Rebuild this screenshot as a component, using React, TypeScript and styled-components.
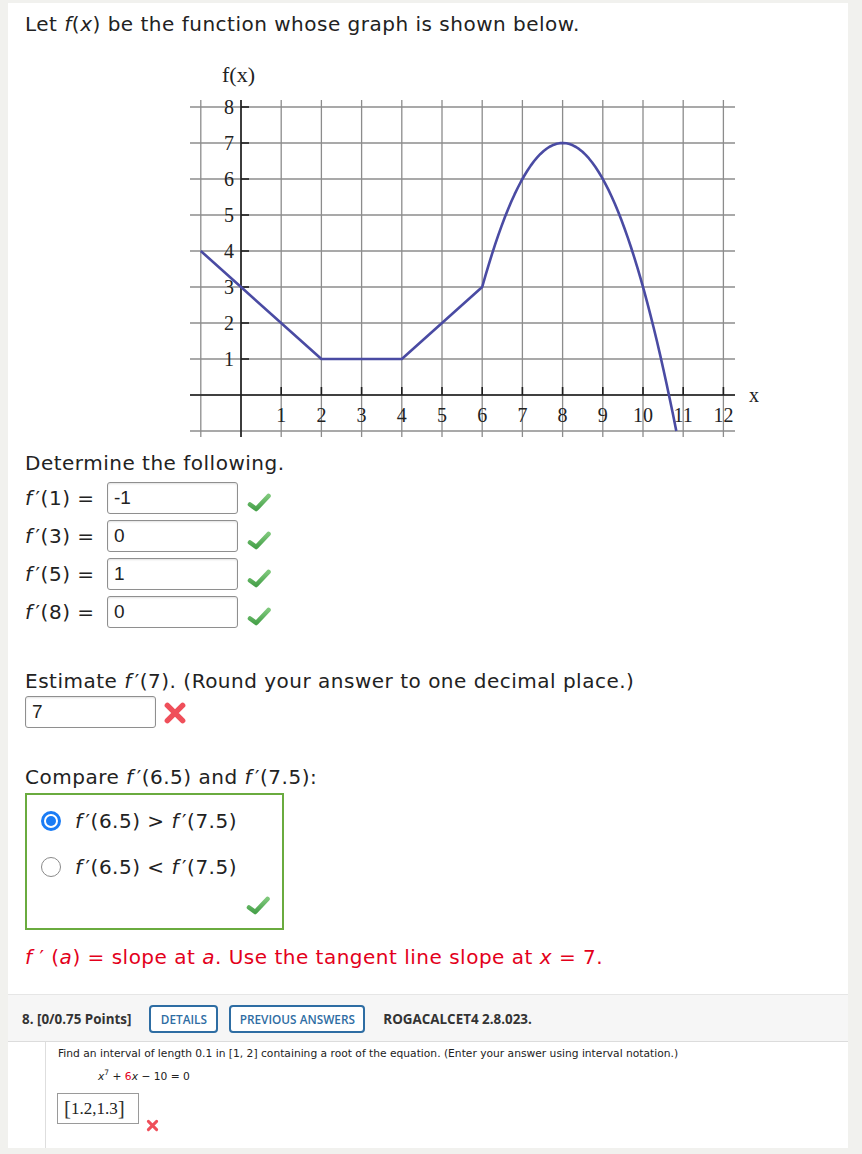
import React from 'react';
import styled, { createGlobalStyle } from 'styled-components';

const Global = createGlobalStyle`
  html, body { margin: 0; padding: 0; }
  body {
    background: #f1f1ee;
    font-family: "DejaVu Sans", Verdana, sans-serif;
    color: #222;
  }
`;

const Page = styled.div`
  padding: 3px 14px 6px 8px;
`;

const Card = styled.div`
  background: #fff;
  min-height: 1145px;
  display: flex;
  flex-direction: column;
`;

const Content = styled.div`
  padding: 9px 0 0 17px;
  display: flex;
  flex-direction: column;
  align-items: flex-start;
`;

const Para = styled.div<{ $mt?: number; $color?: string }>`
  font-size: 20px;
  line-height: 24px;
  letter-spacing: 0.5px;
  margin-top: ${(p) => p.$mt ?? 0}px;
  color: ${(p) => p.$color ?? '#222'};
  white-space: nowrap;
`;

const I = styled.i`
  font-style: italic;
`;

const F = styled.i`
  font-style: italic;
  margin-right: 3px;
`;

const GraphBox = styled.div`
  margin: 19px 0 0 160px;
  width: 600px;
  height: 390px;
`;

const Rows = styled.div`
  margin-top: 7px;
  display: flex;
  flex-direction: column;
  gap: 6px;
`;

const Row = styled.div`
  display: flex;
  align-items: center;
  height: 32px;
`;

const Label = styled.div`
  font-size: 20px;
  letter-spacing: 0.5px;
  width: 82px;
  white-space: nowrap;
`;

const AnswerInput = styled.div<{ $w: number }>`
  width: ${(p) => p.$w}px;
  height: 32px;
  box-sizing: border-box;
  border: 1px solid #8f8f8f;
  border-radius: 3px;
  box-shadow: inset 0 1px 2px rgba(0, 0, 0, 0.12);
  font-family: "Liberation Sans", Arial, sans-serif;
  font-size: 19px;
  line-height: 30px;
  padding-left: 6px;
  color: #222;
  background: #fff;
`;

const Mark = styled.span<{ $ml: number; $dy?: number }>`
  display: inline-flex;
  margin-left: ${(p) => p.$ml}px;
  transform: translateY(${(p) => p.$dy ?? 0}px);
`;

const EstRow = styled.div`
  margin-top: 3px;
  display: flex;
  align-items: center;
`;

const ChoiceBox = styled.div`
  margin-top: 4px;
  width: 259px;
  height: 137px;
  box-sizing: border-box;
  border: 2px solid #6aab3f;
  padding: 10px 10px 0 14px;
  display: flex;
  flex-direction: column;
  gap: 14px;
`;

const Option = styled.div`
  display: flex;
  align-items: center;
  height: 32px;
  gap: 14px;
  font-size: 20px;
  letter-spacing: 0.5px;
  white-space: nowrap;
`;

const Radio = styled.span<{ $on?: boolean }>`
  width: 20px;
  height: 20px;
  box-sizing: border-box;
  border-radius: 50%;
  flex: none;
  background: #fff;
  border: ${(p) => (p.$on ? '3px solid #1a7cf5' : '1.5px solid #8a8a8a')};
  display: flex;
  align-items: center;
  justify-content: center;
  &::after {
    content: '';
    display: ${(p) => (p.$on ? 'block' : 'none')};
    width: 10px;
    height: 10px;
    border-radius: 50%;
    background: #1a7cf5;
  }
`;

const BoxCheck = styled.div`
  display: flex;
  justify-content: flex-end;
  padding-right: 2px;
  margin-top: -2px;
`;

const Bar = styled.div`
  margin-top: 25px;
  height: 48px;
  box-sizing: border-box;
  border-top: 1px solid #e6e6e6;
  border-bottom: 1px solid #dcdcdc;
  background: #f6f6f6;
  display: flex;
  align-items: center;
  padding: 2px 0 0 14px;
  font-family: "Open Sans", "Liberation Sans", sans-serif;
  color: #333;
`;

const BarText = styled.span<{ $ml: number }>`
  font-weight: 700;
  font-size: 13.4px;
  margin-left: ${(p) => p.$ml}px;
  white-space: nowrap;
`;

const BarButton = styled.span<{ $w: number; $ml: number }>`
  width: ${(p) => p.$w}px;
  height: 28px;
  margin-left: ${(p) => p.$ml}px;
  box-sizing: border-box;
  border: 2px solid #2e6da3;
  border-radius: 4px;
  color: #2e6da3;
  font-size: 11.8px;
  font-weight: 600;
  display: flex;
  align-items: center;
  justify-content: center;
  background: #fff;
`;

const QBody = styled.div`
  margin-left: 37px;
  border-left: 1px solid #dedede;
  padding: 4px 0 0 12px;
  flex: 1;
  display: flex;
  flex-direction: column;
  align-items: flex-start;
`;

const Small = styled.div<{ $mt?: number; $ml?: number }>`
  font-size: 10.7px;
  line-height: 16px;
  margin-top: ${(p) => p.$mt ?? 0}px;
  margin-left: ${(p) => p.$ml ?? 0}px;
  white-space: nowrap;
  color: #222;
`;

const Red = styled.span`
  color: #e3001b;
`;

const MathBoxRow = styled.div`
  margin-top: 8px;
  margin-left: -1px;
  display: flex;
  align-items: flex-end;
`;

const MathBox = styled.div`
  width: 82px;
  height: 31px;
  box-sizing: border-box;
  border: 1px solid #9a9a9a;
  font-family: "Liberation Serif", "Times New Roman", serif;
  font-size: 17px;
  display: flex;
  align-items: center;
  padding-left: 6px;
  color: #222;
`;

const Bracket = styled.span`
  font-size: 21px;
  font-weight: 300;
  color: #333;
`;

const Sup = styled.sup`
  font-size: 7.5px;
  vertical-align: 5px;
  line-height: 0;
`;

function Check({ w = 24 }: { w?: number }) {
  const h = (w * 20) / 24;
  return (
    <svg width={w} height={h} viewBox="0 0 24 20">
      <defs>
        <linearGradient id="cg" x1="0" y1="0" x2="0" y2="1">
          <stop offset="0" stopColor="#7dc77a" />
          <stop offset="1" stopColor="#48a24b" />
        </linearGradient>
      </defs>
      <path
        d="M3 12.5 L9.2 17 L21.5 4"
        fill="none"
        stroke="url(#cg)"
        strokeWidth="4.6"
        strokeLinecap="round"
        strokeLinejoin="round"
      />
    </svg>
  );
}

function Cross({ size = 22 }: { size?: number }) {
  return (
    <svg width={size} height={size} viewBox="0 0 22 22">
      <path
        d="M4 4 L18 18 M18 4 L4 18"
        fill="none"
        stroke="#ef4f5a"
        strokeWidth="5"
        strokeLinecap="round"
      />
    </svg>
  );
}

const OX = 56;
const OY = 340;
const UX = 40.2;
const UY = 36;
const sx = (x: number) => OX + x * UX;
const sy = (y: number) => OY - y * UY;

function Graph() {
  const gridX = Array.from({ length: 14 }, (_, i) => i - 1);
  const gridY = Array.from({ length: 10 }, (_, i) => i - 1);
  const pts: [number, number][] = [
    [-1, 4],
    [0, 3],
    [2, 1],
    [4, 1],
    [6, 3],
  ];
  const end = 8 + Math.sqrt(8);
  for (let i = 1; i <= 60; i++) {
    const x = 6 + ((end - 6) * i) / 60;
    pts.push([x, 7 - (x - 8) * (x - 8)]);
  }
  const d = pts.map(([x, y], i) => `${i ? 'L' : 'M'}${sx(x).toFixed(2)} ${sy(y).toFixed(2)}`).join(' ');
  const font = '"Liberation Serif", "Times New Roman", serif';
  return (
    <svg width="600" height="390" viewBox="0 0 600 390">
      {gridX.map((x) => (
        <line key={`gx${x}`} x1={sx(x)} x2={sx(x)} y1={45} y2={382} stroke="#8c8c8c" strokeWidth="1.3" />
      ))}
      {gridY.map((y) => (
        <line key={`gy${y}`} x1={5} x2={550} y1={sy(y)} y2={sy(y)} stroke="#8c8c8c" strokeWidth="1.3" />
      ))}
      <line x1={5} x2={550} y1={sy(0)} y2={sy(0)} stroke="#1e1e1e" strokeWidth="1.6" />
      <line x1={sx(0)} x2={sx(0)} y1={45} y2={382} stroke="#1e1e1e" strokeWidth="1.6" />
      {Array.from({ length: 12 }, (_, i) => i + 1).map((x) => (
        <line key={`tx${x}`} x1={sx(x)} x2={sx(x)} y1={sy(0) - 8} y2={sy(0)} stroke="#1e1e1e" strokeWidth="1.6" />
      ))}
      {Array.from({ length: 8 }, (_, i) => i + 1).map((y) => (
        <line key={`ty${y}`} x1={sx(0)} x2={sx(0) + 8} y1={sy(y)} y2={sy(y)} stroke="#1e1e1e" strokeWidth="1.6" />
      ))}
      {Array.from({ length: 12 }, (_, i) => i + 1).map((x) => (
        <text key={`lx${x}`} x={sx(x)} y={367} textAnchor="middle" fontFamily={font} fontSize="20" fill="#222">
          {x}
        </text>
      ))}
      {Array.from({ length: 8 }, (_, i) => i + 1).map((y) => (
        <text key={`ly${y}`} x={49} y={sy(y) + 7} textAnchor="end" fontFamily={font} fontSize="20" fill="#222">
          {y}
        </text>
      ))}
      <text x={37} y={27} fontFamily={font} fontSize="22" fill="#222">
        f(x)
      </text>
      <text x={564} y={347} fontFamily={font} fontSize="20" fill="#222">
        x
      </text>
      <path d={d} fill="none" stroke="#4a4ba3" strokeWidth="2.6" strokeLinejoin="round" />
    </svg>
  );
}

const derivs = [
  { n: '1', v: '-1' },
  { n: '3', v: '0' },
  { n: '5', v: '1' },
  { n: '8', v: '0' },
];

export default function App() {
  return (
    <Page>
      <Global />
      <Card>
        <Content>
          <Para>
            Let <I>f</I>(<I>x</I>) be the function whose graph is shown below.
          </Para>
          <GraphBox>
            <Graph />
          </GraphBox>
          <Para $mt={6}>Determine the following.</Para>
          <Rows>
            {derivs.map((r) => (
              <Row key={r.n}>
                <Label>
                  <F>f</F>′({r.n}) =
                </Label>
                <AnswerInput $w={131}>{r.v}</AnswerInput>
                <Mark $ml={9} $dy={4}>
                  <Check />
                </Mark>
              </Row>
            ))}
          </Rows>
          <Para $mt={41}>
            Estimate <F>f</F>′(7). (Round your answer to one decimal place.)
          </Para>
          <EstRow>
            <AnswerInput $w={131}>7</AnswerInput>
            <Mark $ml={7} $dy={1}>
              <Cross size={24} />
            </Mark>
          </EstRow>
          <Para $mt={37}>
            Compare <F>f</F>′(6.5) and <F>f</F>′(7.5):
          </Para>
          <ChoiceBox>
            <Option>
              <Radio $on />
              <span>
                <F>f</F>′(6.5) &gt; <F>f</F>′(7.5)
              </span>
            </Option>
            <Option>
              <Radio />
              <span>
                <F>f</F>′(6.5) &lt; <F>f</F>′(7.5)
              </span>
            </Option>
            <BoxCheck>
              <Check />
            </BoxCheck>
          </ChoiceBox>
          <Para $mt={15} $color="#e3001b">
            <I>f</I> ′ (<I>a</I>) = slope at <I>a</I>. Use the tangent line slope at <I>x</I> = 7.
          </Para>
        </Content>
        <Bar>
          <BarText $ml={0}>8. [0/0.75 Points]</BarText>
          <BarButton $w={69} $ml={18}>DETAILS</BarButton>
          <BarButton $w={136} $ml={11}>PREVIOUS ANSWERS</BarButton>
          <BarText $ml={18}>ROGACALCET4 2.8.023.</BarText>
        </Bar>
        <QBody>
          <Small>
            Find an interval of length 0.1 in [1, 2] containing a root of the equation. (Enter your answer using
            interval notation.)
          </Small>
          <Small $mt={7} $ml={40}>
            <I>x</I>
            <Sup>7</Sup> + <Red>6</Red>
            <I>x</I> − 10 = 0
          </Small>
          <MathBoxRow>
            <MathBox>
              <Bracket>[</Bracket>1.2,1.3<Bracket>]</Bracket>
            </MathBox>
            <Mark $ml={7} $dy={8}>
              <Cross size={13} />
            </Mark>
          </MathBoxRow>
        </QBody>
      </Card>
    </Page>
  );
}
